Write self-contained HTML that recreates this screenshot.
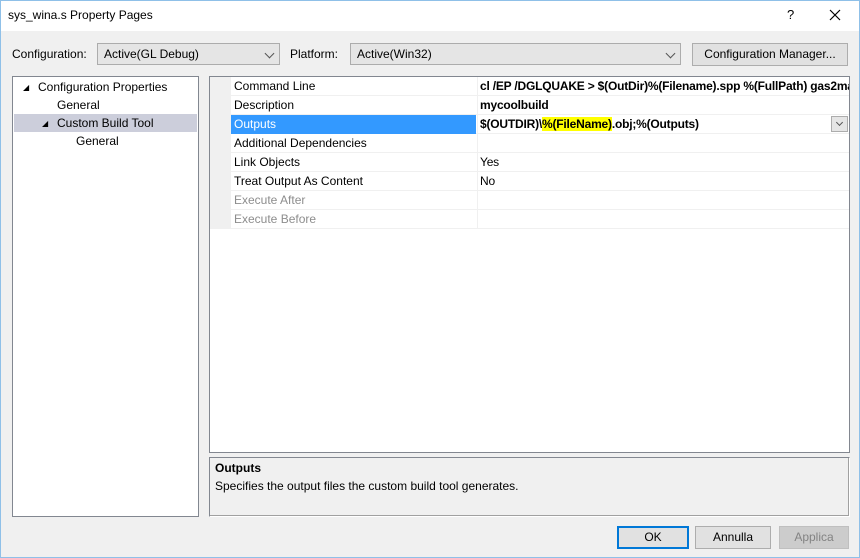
<!DOCTYPE html>
<html><head><style>
*{box-sizing:border-box;margin:0;padding:0}
body{width:860px;height:558px;background:#f0f0f0;font-family:"Segoe UI","Liberation Sans",sans-serif;font-size:12px;color:#000;position:relative;overflow:hidden}
.abs{position:absolute}
.title{left:0;top:0;width:860px;height:31px;background:#fff}
.combo{background:#e5e5e5;border:1px solid #acacac;height:22px;line-height:20px;padding-left:6px}
.chev{position:absolute;right:6px;top:6px;width:7px;height:7px;border-right:1px solid #555;border-bottom:1px solid #555;transform:rotate(45deg)}
.btn{background:#e1e1e1;border:1px solid #adadad;height:23px;line-height:21px;text-align:center}
.row{position:absolute;left:21px;right:0;height:19px;border-bottom:1px solid #f0f0f0;line-height:19px}
.row .n{position:absolute;left:0;width:245px;padding-left:3px;height:19px}
.row .v{position:absolute;left:246px;right:0;padding-left:2px;height:19px;border-left:1px solid #f0f0f0;font-weight:bold;white-space:nowrap;overflow:hidden;letter-spacing:-0.2px}
.dis{color:#8d8d8d}
</style></head><body>
<div class="abs title"></div>
<div class="abs" style="left:8px;top:8px;font-size:12px">sys_wina.s Property Pages</div>
<div class="abs" style="left:787px;top:7px;font-size:13px">?</div>
<svg class="abs" style="left:829px;top:9px" width="12" height="12"><path d="M1 1L11 11M11 1L1 11" stroke="#000" stroke-width="1.2"/></svg>

<div class="abs" style="left:12px;top:47px">Configuration:</div>
<div class="abs combo" style="left:97px;top:43px;width:183px">Active(GL Debug)<div class="chev"></div></div>
<div class="abs" style="left:290px;top:47px">Platform:</div>
<div class="abs combo" style="left:350px;top:43px;width:331px">Active(Win32)<div class="chev"></div></div>
<div class="abs btn" style="left:692px;top:43px;width:156px">Configuration Manager...</div>

<div class="abs" style="left:12px;top:76px;width:187px;height:441px;background:#fff;border:1px solid #828790">
 <div class="abs" style="left:10px;top:6px;font-size:8px">◢</div>
 <div class="abs" style="left:25px;top:3px">Configuration Properties</div>
 <div class="abs" style="left:44px;top:21px">General</div>
 <div class="abs" style="left:1px;top:37px;width:183px;height:18px;background:#cccedb"></div>
 <div class="abs" style="left:29px;top:42px;font-size:8px">◢</div>
 <div class="abs" style="left:44px;top:39px">Custom Build Tool</div>
 <div class="abs" style="left:63px;top:57px">General</div>
</div>

<div class="abs" style="left:209px;top:76px;width:641px;height:377px;background:#fff;border:1px solid #828790;overflow:hidden">
 <div class="abs" style="left:0;top:0;width:21px;height:152px;background:#f0f0f0"></div>
 <div class="row" style="top:0"><div class="n">Command Line</div><div class="v">cl /EP /DGLQUAKE &gt; $(OutDir)%(Filename).spp %(FullPath) gas2masm</div></div>
 <div class="row" style="top:19px"><div class="n">Description</div><div class="v">mycoolbuild</div></div>
 <div class="row" style="top:38px"><div class="n" style="background:#3399ff;color:#fff">Outputs</div><div class="v">$(OUTDIR)\<span style="background:#ffff00">%(FileName)</span>.obj;%(Outputs)<div class="abs" style="right:1px;top:1px;width:17px;height:16px;background:#e5e5e5;border:1px solid #acacac"><div class="chev" style="right:5px;top:3px;width:5px;height:5px"></div></div></div></div>
 <div class="row" style="top:57px"><div class="n">Additional Dependencies</div><div class="v"></div></div>
 <div class="row" style="top:76px"><div class="n">Link Objects</div><div class="v" style="font-weight:normal">Yes</div></div>
 <div class="row" style="top:95px"><div class="n">Treat Output As Content</div><div class="v" style="font-weight:normal">No</div></div>
 <div class="row" style="top:114px"><div class="n dis">Execute After</div><div class="v"></div></div>
 <div class="row" style="top:133px"><div class="n dis">Execute Before</div><div class="v"></div></div>
</div>

<div class="abs" style="left:209px;top:457px;width:641px;height:60px;border:1px solid #828790;border-right-color:#fff;border-bottom-color:#fff;box-shadow:inset -1px -1px 0 #a0a0a0">
 <div class="abs" style="left:5px;top:3px;font-weight:bold">Outputs</div>
 <div class="abs" style="left:5px;top:21px">Specifies the output files the custom build tool generates.</div>
</div>

<div class="abs btn" style="left:617px;top:526px;width:72px;border:2px solid #0078d7;line-height:19px">OK</div>
<div class="abs btn" style="left:695px;top:526px;width:76px">Annulla</div>
<div class="abs btn" style="left:779px;top:526px;width:70px;background:#ccc;border-color:#bfbfbf;color:#838383">Applica</div>

<div class="abs" style="left:0;top:0;width:860px;height:1px;background:#8fc0e8"></div>
<div class="abs" style="left:0;top:0;width:1px;height:558px;background:#8fc0e8"></div>
<div class="abs" style="right:0;top:0;width:1px;height:558px;background:#8fc0e8"></div>
<div class="abs" style="left:0;bottom:0;width:860px;height:1px;background:#8fc0e8"></div>
</body></html>
